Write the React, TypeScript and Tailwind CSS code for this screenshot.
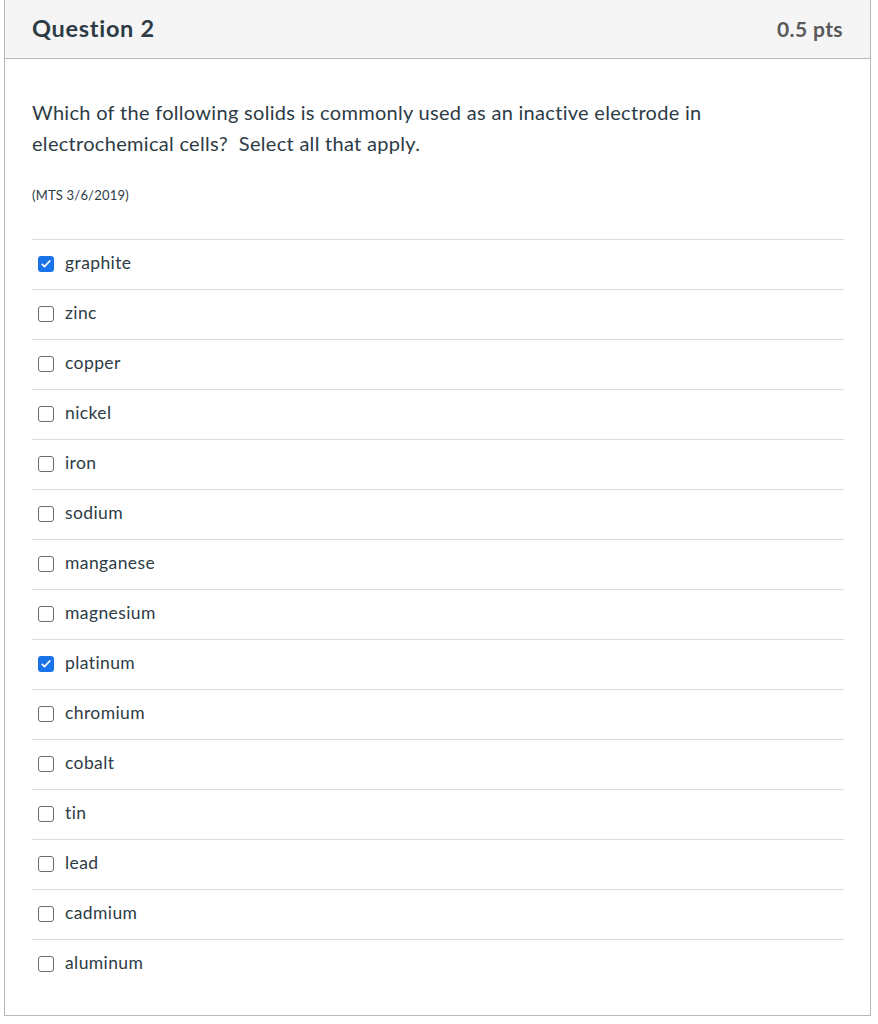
import React from 'react';

const answers = [
  { label: 'graphite', checked: true },
  { label: 'zinc', checked: false },
  { label: 'copper', checked: false },
  { label: 'nickel', checked: false },
  { label: 'iron', checked: false },
  { label: 'sodium', checked: false },
  { label: 'manganese', checked: false },
  { label: 'magnesium', checked: false },
  { label: 'platinum', checked: true },
  { label: 'chromium', checked: false },
  { label: 'cobalt', checked: false },
  { label: 'tin', checked: false },
  { label: 'lead', checked: false },
  { label: 'cadmium', checked: false },
  { label: 'aluminum', checked: false },
];

function Checkbox({ checked }: { checked: boolean }) {
  if (checked) {
    return (
      <span className="flex h-[16px] w-[16px] items-center justify-center rounded-[3px] bg-[#1a73e8]">
        <svg viewBox="0 0 16 16" className="h-[12px] w-[12px]" fill="none">
          <path d="M3 8.5l3 3 7-7.5" stroke="white" strokeWidth="2.4" strokeLinecap="round" strokeLinejoin="round" />
        </svg>
      </span>
    );
  }
  return <span className="block h-[16px] w-[16px] rounded-[3px] border-[1.5px] border-[#6b6b6b] bg-white" />;
}

export default function App() {
  return (
    <div className="min-h-screen bg-white font-['Lato','Open_Sans',sans-serif] text-[#2d3b45]">
      <div className="ml-[4px] w-[867px] border border-t-0 border-[#b5b9bc] h-[1016px]">
        {/* Header */}
        <div className="flex h-[59px] items-center justify-between border-b border-[#b5b9bc] bg-[#f5f5f5] pl-[27px] pr-[27px]">
          <h2 className="text-[23.5px] tracking-[0.7px] font-bold text-[#2d3b45]">Question 2</h2>
          <span className="text-[21px] tracking-[0.4px] font-bold text-[#595959]">0.5 pts</span>
        </div>

        {/* Body */}
        <div className="pl-[27px] pr-[26px] pt-[38px]">
          <p className="max-w-[760px] text-[20px] leading-[31px] tracking-[0.3px]">
            Which of the following solids is commonly used as an inactive electrode in electrochemical cells?&nbsp; Select all that apply.
          </p>
          <p className="mt-[27px] text-[13px] tracking-[0.2px]">(MTS 3/6/2019)</p>

          <div className="mt-[33px]">
            {answers.map((a) => (
              <div key={a.label} className="flex h-[50px] items-center gap-[11px] border-t border-[#dcdcdc] pl-[6px]">
                <Checkbox checked={a.checked} />
                <span className="text-[17.5px] tracking-[0.4px] -mt-[2px]">{a.label}</span>
              </div>
            ))}
          </div>
        </div>
      </div>
    </div>
  );
}
